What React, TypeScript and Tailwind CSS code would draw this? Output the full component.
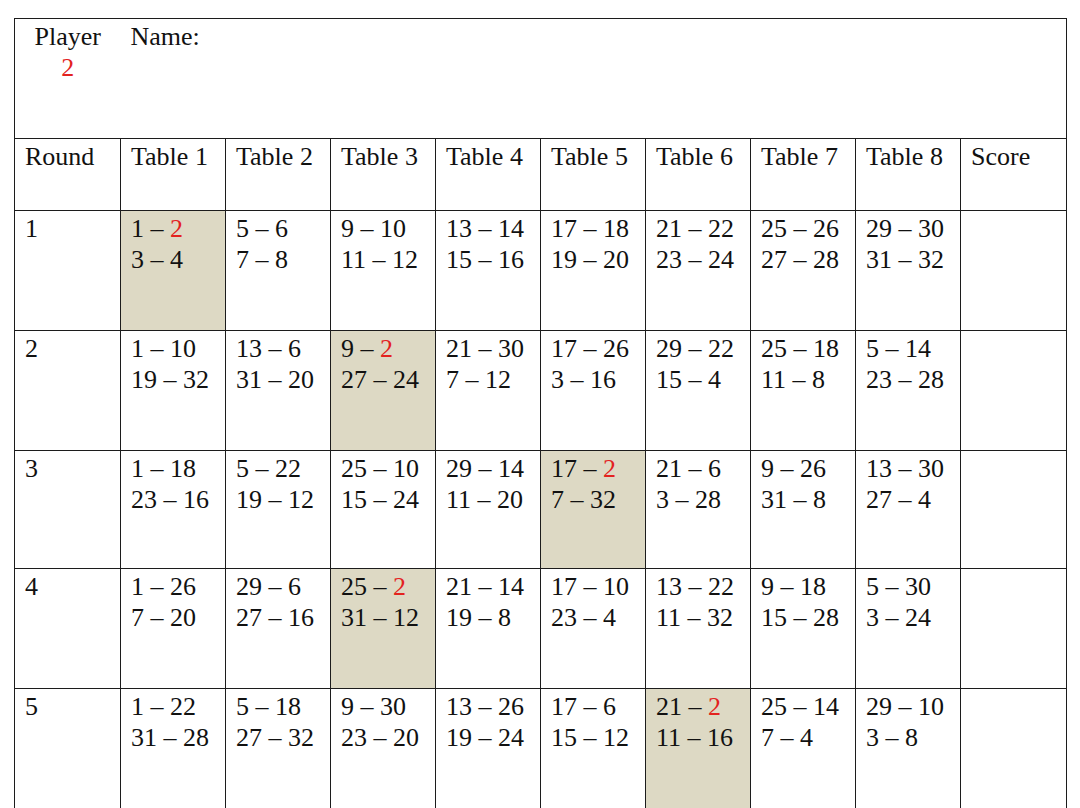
import React from 'react'

type Match = [string, string]

interface Round {
  n: number
  hl: number
  tables: Match[]
}

const rounds: Round[] = [
  {
    n: 1,
    hl: 0,
    tables: [
      ['1 – 2', '3 – 4'], ['5 – 6', '7 – 8'], ['9 – 10', '11 – 12'], ['13 – 14', '15 – 16'],
      ['17 – 18', '19 – 20'], ['21 – 22', '23 – 24'], ['25 – 26', '27 – 28'], ['29 – 30', '31 – 32'],
    ],
  },
  {
    n: 2,
    hl: 2,
    tables: [
      ['1 – 10', '19 – 32'], ['13 – 6', '31 – 20'], ['9 – 2', '27 – 24'], ['21 – 30', '7 – 12'],
      ['17 – 26', '3 – 16'], ['29 – 22', '15 – 4'], ['25 – 18', '11 – 8'], ['5 – 14', '23 – 28'],
    ],
  },
  {
    n: 3,
    hl: 4,
    tables: [
      ['1 – 18', '23 – 16'], ['5 – 22', '19 – 12'], ['25 – 10', '15 – 24'], ['29 – 14', '11 – 20'],
      ['17 – 2', '7 – 32'], ['21 – 6', '3 – 28'], ['9 – 26', '31 – 8'], ['13 – 30', '27 – 4'],
    ],
  },
  {
    n: 4,
    hl: 2,
    tables: [
      ['1 – 26', '7 – 20'], ['29 – 6', '27 – 16'], ['25 – 2', '31 – 12'], ['21 – 14', '19 – 8'],
      ['17 – 10', '23 – 4'], ['13 – 22', '11 – 32'], ['9 – 18', '15 – 28'], ['5 – 30', '3 – 24'],
    ],
  },
  {
    n: 5,
    hl: 5,
    tables: [
      ['1 – 22', '31 – 28'], ['5 – 18', '27 – 32'], ['9 – 30', '23 – 20'], ['13 – 26', '19 – 24'],
      ['17 – 6', '15 – 12'], ['21 – 2', '11 – 16'], ['25 – 14', '7 – 4'], ['29 – 10', '3 – 8'],
    ],
  },
]

const rowHeights = ['h-[120px]', 'h-[120px]', 'h-[118px]', 'h-[120px]', 'h-[124px]']

// first line "x – 2" shows the 2 in red
function FirstLine({ text }: { text: string }) {
  if (text.endsWith(' – 2')) {
    return (
      <>
        {text.slice(0, -1)}
        <span className="text-[#e3231f]">2</span>
      </>
    )
  }
  return <>{text}</>
}

const cell = 'border border-[#1c1c1c] align-top pt-[2px] px-[10px]'

export default function App() {
  return (
    <div
      className="h-[808px] w-[1080px] overflow-hidden bg-white pt-[18px] pl-[14px] text-[26px] leading-[31px] text-[#111]"
      style={{ fontFamily: '"Liberation Serif", "Times New Roman", serif' }}
    >
      <table className="table-fixed border-collapse w-[1053px]">
        <colgroup>
          <col className="w-[106px]" />
          {Array.from({ length: 8 }).map((_, i) => (
            <col key={i} className="w-[105px]" />
          ))}
          <col className="w-[106px]" />
        </colgroup>
        <tbody>
          {/* Player / Name: one box, no divider */}
          <tr className="h-[120px]">
            <td className={`${cell} border-r-0 text-center`}>
              <div>Player</div>
              <div className="text-[#e3231f]">2</div>
            </td>
            <td className={`${cell} border-l-0`} colSpan={9}>
              Name:
            </td>
          </tr>

          {/* Column titles */}
          <tr className="h-[72px]">
            <td className={cell}>Round</td>
            {Array.from({ length: 8 }).map((_, i) => (
              <td key={i} className={`${cell} whitespace-nowrap`}>
                Table {i + 1}
              </td>
            ))}
            <td className={cell}>Score</td>
          </tr>

          {rounds.map((r, ri) => (
            <tr key={r.n} className={rowHeights[ri]}>
              <td className={cell}>{r.n}</td>
              {r.tables.map((m, ti) => (
                <td
                  key={ti}
                  className={`${cell} whitespace-nowrap ${ti === r.hl ? 'bg-[#ddd9c4]' : ''}`}
                >
                  <div>
                    <FirstLine text={m[0]} />
                  </div>
                  <div>{m[1]}</div>
                </td>
              ))}
              <td className={cell}></td>
            </tr>
          ))}
        </tbody>
      </table>
    </div>
  )
}
